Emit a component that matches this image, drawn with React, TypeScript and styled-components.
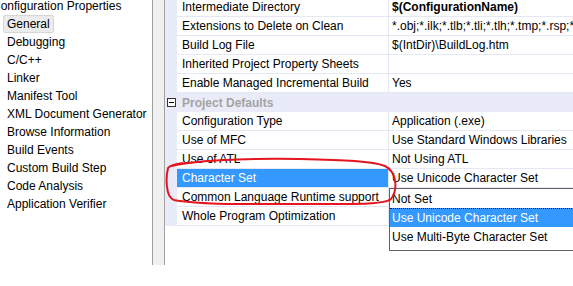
import React from 'react';
import styled, { createGlobalStyle } from 'styled-components';

const GlobalStyle = createGlobalStyle`
    html, body {
        margin: 0;
        padding: 0;
        background: #fff;
    }
    body {
        font-family: 'Liberation Sans', Arial, sans-serif;
        font-size: 12px;
        color: #000;
    }
`;

type Prop = {
    name: string,
    value?: string,
    bold?: boolean,
    selected?: boolean
}

const generalProps: Prop[] = [
    { name: 'Intermediate Directory', value: '$(ConfigurationName)', bold: true },
    { name: 'Extensions to Delete on Clean', value: '*.obj;*.ilk;*.tlb;*.tli;*.tlh;*.tmp;*.rsp;*.pgc;*.pgd' },
    { name: 'Build Log File', value: '$(IntDir)\\BuildLog.htm' },
    { name: 'Inherited Project Property Sheets', value: '' },
    { name: 'Enable Managed Incremental Build', value: 'Yes' },
];

const defaultProps: Prop[] = [
    { name: 'Configuration Type', value: 'Application (.exe)' },
    { name: 'Use of MFC', value: 'Use Standard Windows Libraries' },
    { name: 'Use of ATL', value: 'Not Using ATL' },
    { name: 'Character Set', value: 'Use Unicode Character Set', selected: true },
    { name: 'Common Language Runtime support', value: '' },
    { name: 'Whole Program Optimization', value: '' },
];

const treeItems = [
    'General', 'Debugging', 'C/C++', 'Linker', 'Manifest Tool', 'XML Document Generator',
    'Browse Information', 'Build Events', 'Custom Build Step', 'Code Analysis', 'Application Verifier'
];

const options = ['Not Set', 'Use Unicode Character Set', 'Use Multi-Byte Character Set'];

const Page = styled.div`
    position: relative;
    width: 573px;
    height: 286px;
    overflow: hidden;
    background: #fff;
`;

const Body = styled.div`
    display: flex;
    height: 265px;
`;

const Tree = styled.div`
    flex: 0 0 152px;
    border-right: 1px solid #a0a0a0;
    display: flex;
    flex-direction: column;
    overflow: hidden;
`;

const TreeRoot = styled.div`
    height: 15px;
    line-height: 12px;
    margin-left: -8px;
    white-space: nowrap;
`;

const TreeItem = styled.div<{ $active?: boolean }>`
    align-self: flex-start;
    height: 16px;
    line-height: 16px;
    margin-left: 3px;
    padding: 0 3px;
    white-space: nowrap;
    border: 1px solid ${p => p.$active ? '#d6d6d6' : 'transparent'};
    border-radius: 2px;
    background: ${p => p.$active ? '#ececec' : 'transparent'};
`;

const Gutter = styled.div`
    flex: 0 0 11px;
    background: #f0f0f0;
    border-right: 1px solid #a0a0a0;
`;

const Grid = styled.div`
    position: relative;
    flex: 1;
    min-width: 0;
    display: flex;
    flex-direction: column;
    margin-top: -2px;
`;

const Row = styled.div`
    display: flex;
    height: 19px;
`;

const Margin = styled.div`
    flex: 0 0 12px;
    background: #e9ecf8;
`;

const NameCell = styled.div<{ $selected?: boolean }>`
    flex: 0 0 206px;
    padding-left: 5px;
    height: 18px;
    line-height: 18px;
    border-bottom: 1px solid #e4e8f4;
    border-right: 1px solid #e4e8f4;
    background: ${p => p.$selected ? '#3399ff' : '#fff'};
    color: ${p => p.$selected ? '#fff' : '#000'};
    white-space: nowrap;
    overflow: hidden;
`;

const ValueCell = styled.div<{ $bold?: boolean }>`
    flex: 1;
    min-width: 0;
    padding-left: 3px;
    height: 18px;
    line-height: 18px;
    border-bottom: 1px solid #e4e8f4;
    font-weight: ${p => p.$bold ? 700 : 400};
    white-space: nowrap;
    overflow: hidden;
`;

const Category = styled.div`
    display: flex;
    align-items: center;
    height: 19px;
    background: #e9ecf8;
    color: #a3a3a3;
    font-weight: 700;
`;

const CategoryToggle = styled.div`
    width: 12px;
    display: flex;
    justify-content: center;
    margin-right: 5px;
`;

const Dropdown = styled.div`
    position: absolute;
    left: 224px;
    top: 190px;
    right: -20px;
    height: 61px;
    background: #fff;
    border: 1px solid #646464;
`;

const Option = styled.div<{ $selected?: boolean }>`
    height: 19px;
    line-height: 18px;
    padding-left: 2px;
    white-space: nowrap;
    background: ${p => p.$selected ? '#3399ff' : '#fff'};
    color: ${p => p.$selected ? '#fff' : '#000'};
    border-top: 1px dotted ${p => p.$selected ? '#000' : 'transparent'};
    box-sizing: border-box;
`;

const Scribble = styled.svg`
    position: absolute;
    left: 0;
    top: 0;
    pointer-events: none;
`;

const MinusBox = () => (
    <svg width="9" height="9" viewBox="0 0 9 9">
        <rect x="0.5" y="0.5" width="8" height="8" fill="#fff" stroke="#333" />
        <line x1="2" y1="4.5" x2="7" y2="4.5" stroke="#000" />
    </svg>
);

const PropRow = ({ p }: { p: Prop }) => (
    <Row>
        <Margin />
        <NameCell $selected={p.selected}>{p.name}</NameCell>
        <ValueCell $bold={p.bold}>{p.value}</ValueCell>
    </Row>
);

const App = () => {
    return (
        <Page>
            <GlobalStyle />
            <Body>
                <Tree>
                    <TreeRoot>Configuration Properties</TreeRoot>
                    {treeItems.map((t, i) => (
                        <TreeItem key={t} $active={i === 0}>{t}</TreeItem>
                    ))}
                </Tree>
                <Gutter />
                <Grid>
                    {generalProps.map(p => <PropRow key={p.name} p={p} />)}
                    <Category>
                        <CategoryToggle><MinusBox /></CategoryToggle>
                        Project Defaults
                    </Category>
                    {defaultProps.map(p => <PropRow key={p.name} p={p} />)}
                    <Dropdown>
                        {options.map((o, i) => (
                            <Option key={o} $selected={i === 1}>{o}</Option>
                        ))}
                    </Dropdown>
                </Grid>
            </Body>
            <Scribble width="573" height="286">
                <path
                    d="M172 166 C 190 161, 240 158, 300 159 C 345 160, 372 161, 385 166 C 397 172, 398 190, 391 199 C 384 205, 350 204, 300 204 C 250 204, 200 205, 174 200 C 165 197, 166 176, 168 168 C 170 165, 176 164, 183 163"
                    fill="none"
                    stroke="#e5141e"
                    strokeWidth="2"
                />
            </Scribble>
        </Page>
    );
};

export default App;
